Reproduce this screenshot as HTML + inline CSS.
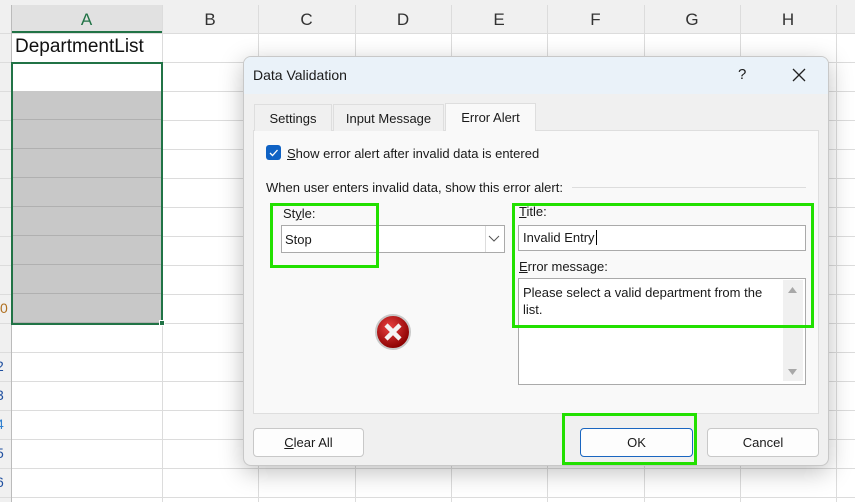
<!DOCTYPE html>
<html><head><style>
*{box-sizing:border-box;margin:0;padding:0}
body{width:855px;height:502px;overflow:hidden;background:#fff;font-family:"Liberation Sans",sans-serif;position:relative;font-size:13px;color:#1a1a1a}
.a{position:absolute}
.hl{position:absolute;left:0;width:855px;height:1px;background:#dcdcdc}
.vl{position:absolute;top:5px;width:1px;height:497px;background:#dcdcdc}
.ch{position:absolute;top:5px;height:28px;line-height:30px;text-align:center;font-size:17px;color:#333}
.g{outline:3px solid #22e000;outline-offset:-3px;border:3px solid #22e000}
.btn{position:absolute;background:#fdfdfd;border:1px solid #c8c8c8;border-radius:4px;text-align:center;line-height:27px;font-size:13px}
</style></head><body>
<div class="a" style="left:0;top:0;width:855px;height:33px;background:#f0f0f0"></div>
<div class="a" style="left:0;top:0;width:11px;height:502px;background:#f0f0f0"></div>
<div class="a" style="left:11px;top:5px;width:151px;height:28px;background:#e1e1e1;border-bottom:2px solid #217346"></div>
<div class="ch" style="left:11px;width:151px;color:#217346">A</div>
<div class="ch" style="left:162px;width:96px">B</div>
<div class="ch" style="left:258px;width:97px">C</div>
<div class="ch" style="left:355px;width:96px">D</div>
<div class="ch" style="left:451px;width:96px">E</div>
<div class="ch" style="left:547px;width:97px">F</div>
<div class="ch" style="left:644px;width:96px">G</div>
<div class="ch" style="left:740px;width:96px">H</div>
<div class="hl" style="top:33px"></div><div class="hl" style="top:62px"></div><div class="hl" style="top:91px"></div><div class="hl" style="top:120px"></div><div class="hl" style="top:149px"></div><div class="hl" style="top:178px"></div><div class="hl" style="top:207px"></div><div class="hl" style="top:236px"></div><div class="hl" style="top:265px"></div><div class="hl" style="top:294px"></div><div class="hl" style="top:323px"></div><div class="hl" style="top:352px"></div><div class="hl" style="top:381px"></div><div class="hl" style="top:410px"></div><div class="hl" style="top:439px"></div><div class="hl" style="top:468px"></div><div class="hl" style="top:497px"></div>
<div class="vl" style="left:11px;background:#bbb"></div><div class="vl" style="left:162px"></div><div class="vl" style="left:258px"></div><div class="vl" style="left:355px"></div><div class="vl" style="left:451px"></div><div class="vl" style="left:547px"></div><div class="vl" style="left:644px"></div><div class="vl" style="left:740px"></div><div class="vl" style="left:836px"></div>
<div class="a" style="left:0;top:300px;font-size:14px;color:#b07020">0</div>
<div class="a" style="left:-4px;top:358px;font-size:14px;color:#2050a0">2</div>
<div class="a" style="left:-4px;top:387px;font-size:14px;color:#2050a0">3</div>
<div class="a" style="left:-4px;top:416px;font-size:14px;color:#3080d0">4</div>
<div class="a" style="left:-4px;top:445px;font-size:14px;color:#2050a0">5</div>
<div class="a" style="left:-4px;top:474px;font-size:14px;color:#2050a0">6</div>
<div class="a" style="left:15px;top:36px;font-size:19px;color:#111">DepartmentList</div>
<div class="a" style="left:12px;top:91px;width:150px;height:232px;background:#c8c8c8;background-image:repeating-linear-gradient(#c8c8c8 0 28px,#b0b0b0 28px 29px)"></div>
<div class="a" style="left:11px;top:62px;width:152px;height:263px;border:2px solid #217346"></div>
<div class="a" style="left:159px;top:320px;width:6px;height:6px;background:#217346;border:1px solid #fff"></div>
<!-- dialog -->
<div class="a" style="left:243px;top:56px;width:586px;height:410px;background:#f0f0f0;border:1px solid #c8c8c8;border-radius:8px;box-shadow:0 6px 24px rgba(0,0,0,.25);overflow:hidden">
<div class="a" style="left:0;top:0;width:586px;height:37px;background:#eaf2f9"></div>
<div class="a" style="left:9px;top:10px;font-size:14px">Data Validation</div>
<div class="a" style="left:494px;top:9px;font-size:15px">?</div>
<svg class="a" style="left:548px;top:11px" width="14" height="14"><path d="M1 1L13 13M13 1L1 13" stroke="#222" stroke-width="1.3"/></svg>
<div class="a" style="left:9px;top:73px;width:566px;height:284px;background:#f9f9f9;border:1px solid #dedede"></div>
<div class="a" style="left:10px;top:47px;width:78px;height:27px;background:#f0f0f0;border:1px solid #dedede;border-bottom:none;text-align:center;line-height:28px">Settings</div>
<div class="a" style="left:89px;top:47px;width:111px;height:27px;background:#f0f0f0;border:1px solid #dedede;border-bottom:none;text-align:center;line-height:28px">Input Message</div>
<div class="a" style="left:201px;top:46px;width:91px;height:28px;background:#f9f9f9;border:1px solid #dedede;border-bottom:none;text-align:center;line-height:27px">Error Alert</div>
<div class="a" style="left:22px;top:88px;width:15px;height:15px;background:#0f62c4;border-radius:3px"></div>
<svg class="a" style="left:24px;top:90px" width="11" height="11"><path d="M2 6L4.5 8.5L9.5 3" stroke="#fff" stroke-width="1.3" fill="none"/></svg>
<div class="a" style="left:43px;top:89px"><u>S</u>how error alert after invalid data is entered</div>
<div class="a" style="left:22px;top:123px">When user enters invalid data, show this error alert:</div>
<div class="a" style="left:328px;top:130px;width:234px;height:1px;background:#ddd"></div>
<div class="a" style="left:37px;top:168px;width:224px;height:28px;background:#fff;border:1px solid #aaa"></div>
<div class="a" style="left:241px;top:169px;width:19px;height:26px;border-left:1px solid #ddd"></div>
<svg class="a" style="left:244px;top:178px" width="12" height="8"><path d="M1 1L6 6L11 1" stroke="#555" fill="none"/></svg>
<div class="a" style="left:41px;top:175px">Stop</div>
<div class="a" style="left:39px;top:149px">St<u>y</u>le:</div>
<div class="a g" style="left:26px;top:146px;width:109px;height:65px"></div>
<div class="a" style="left:275px;top:147px"><u>T</u>itle:</div>
<div class="a" style="left:274px;top:168px;width:288px;height:26px;background:#fff;border:1px solid #aaa"></div>
<div class="a" style="left:279px;top:173px">Invalid Entry<span style="border-left:1px solid #000;margin-left:1px"></span></div>
<div class="a" style="left:275px;top:202px"><u>E</u>rror message:</div>
<div class="a" style="left:274px;top:221px;width:288px;height:107px;background:#fff;border:1px solid #aaa"></div>
<div class="a" style="left:539px;top:223px;width:20px;height:101px;background:#f0f0f0"></div>
<svg class="a" style="left:543px;top:229px" width="11" height="90"><path d="M1 7L5.5 1L10 7Z M1 83L5.5 89L10 83Z" fill="#a8a8a8"/></svg>
<div class="a" style="left:279px;top:227px;width:260px;line-height:17px">Please select a valid department from the list.</div>
<div class="a g" style="left:268px;top:146px;width:302px;height:125px"></div>
<svg class="a" style="left:130px;top:256px" width="38" height="38"><defs><radialGradient id="r" cx="40%" cy="35%" r="65%"><stop offset="0" stop-color="#e84040"/><stop offset="1" stop-color="#8a0000"/></radialGradient></defs><circle cx="19" cy="19" r="17" fill="url(#r)" stroke="#c9c9c9" stroke-width="2"/><path d="M12 12L26 26M26 12L12 26" stroke="#f4f4f4" stroke-width="4.5"/></svg>
<div class="btn" style="left:9px;top:371px;width:111px;height:29px"><u>C</u>lear All</div>
<div class="btn" style="left:336px;top:371px;width:113px;height:29px;border-color:#1a66c0">OK</div>
<div class="btn" style="left:463px;top:371px;width:112px;height:29px">Cancel</div>
<div class="a g" style="left:318px;top:356px;width:135px;height:52px"></div>
</div>
</body></html>
